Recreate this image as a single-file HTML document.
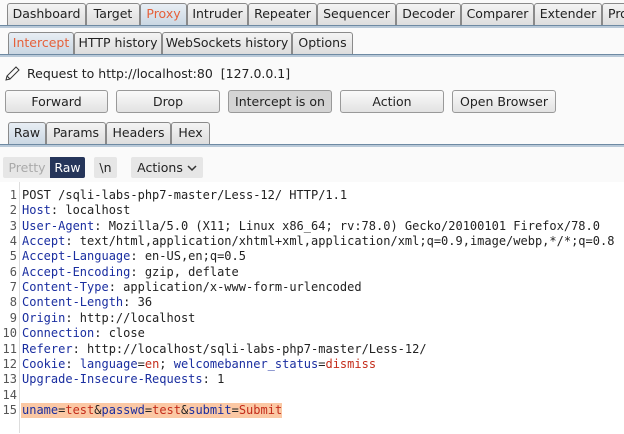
<!DOCTYPE html>
<html><head><style>
*{margin:0;padding:0;box-sizing:border-box}
body{width:624px;height:433px;overflow:hidden;background:#fff;font-family:"DejaVu Sans","Liberation Sans",sans-serif;font-size:12px;color:#222;position:relative}
.a{position:absolute}
.tab{position:absolute;border:1px solid #8a8a8a;border-bottom:none;border-radius:3px 3px 0 0;background:linear-gradient(#f4f4f4,#dcdcdc);text-align:center;font-size:12.5px;line-height:20px;color:#222}
.tab.sel{background:linear-gradient(#e8eef4,#c9d6e2);color:#e5603a}
.line{position:absolute;left:0;width:624px;height:3px;background:#b9c9d8;border-top:1px solid #6e8aa3}
.btn{position:absolute;top:90px;height:23px;border:1px solid #999;border-radius:3px;background:linear-gradient(#fafafa,#e2e2e2);text-align:center;line-height:21px;font-size:12.5px}
.sm{position:absolute;top:157px;height:21px;border-radius:2px;background:#e6e6e6;text-align:center;line-height:21px;font-size:12.5px}
.ed{position:absolute;left:0;top:188px;font-family:"DejaVu Sans Mono",monospace;font-size:12px;line-height:15.35px;white-space:pre}
.ln{position:absolute;left:0;width:17px;text-align:right;color:#555}
.tx{position:absolute;left:22px}
.k{color:#1a2ea0}.v{color:#c42c1a}
</style></head><body>
<div class="a" style="left:0;top:0;width:624px;height:182px;background:#fafafa"></div>
<div class="tab" style="left:7px;top:3px;width:79px;height:23px">Dashboard</div>
<div class="tab" style="left:86px;top:3px;width:54px;height:23px">Target</div>
<div class="tab sel" style="left:140px;top:3px;width:47px;height:23px">Proxy</div>
<div class="tab" style="left:187px;top:3px;width:61px;height:23px">Intruder</div>
<div class="tab" style="left:248px;top:3px;width:69px;height:23px">Repeater</div>
<div class="tab" style="left:317px;top:3px;width:79px;height:23px">Sequencer</div>
<div class="tab" style="left:396px;top:3px;width:65px;height:23px">Decoder</div>
<div class="tab" style="left:461px;top:3px;width:73px;height:23px">Comparer</div>
<div class="tab" style="left:534px;top:3px;width:68px;height:23px">Extender</div>
<div class="tab" style="left:602px;top:3px;width:40px;height:23px;text-align:left;padding-left:5px">Pro</div>
<div class="line" style="top:25px"></div>
<div class="tab sel" style="left:8px;top:32px;width:66px;height:22px">Intercept</div>
<div class="tab" style="left:74px;top:32px;width:88px;height:22px">HTTP history</div>
<div class="tab" style="left:162px;top:32px;width:130px;height:22px">WebSockets history</div>
<div class="tab" style="left:292px;top:32px;width:61px;height:22px">Options</div>
<div class="line" style="top:54px"></div>
<svg class="a" style="left:4px;top:66px" width="16" height="16" viewBox="0 0 16 16"><path d="M2 14 L3 10 L12 1 L15 4 L6 13 Z M3 10 L6 13" fill="none" stroke="#333" stroke-width="1"/></svg>
<div class="a" style="left:27px;top:66px;font-size:12.5px">Request to http://localhost:80&nbsp; [127.0.0.1]</div>
<div class="btn" style="left:5px;width:103px">Forward</div>
<div class="btn" style="left:116px;width:104px">Drop</div>
<div class="btn" style="left:228px;width:104px;background:#d4d4d4">Intercept is on</div>
<div class="btn" style="left:340px;width:104px">Action</div>
<div class="btn" style="left:452px;width:104px">Open Browser</div>
<div class="tab sel" style="left:8px;top:122px;width:38px;height:23px;color:#222">Raw</div>
<div class="tab" style="left:46px;top:122px;width:60px;height:23px">Params</div>
<div class="tab" style="left:106px;top:122px;width:65px;height:23px">Headers</div>
<div class="tab" style="left:171px;top:122px;width:39px;height:23px">Hex</div>
<div class="line" style="top:144px"></div>
<div class="sm" style="left:3px;width:48px;color:#aaa;border-radius:2px 0 0 2px">Pretty</div>
<div class="sm" style="left:50px;width:35px;background:#25355a;color:#fff;border-radius:0 2px 2px 0">Raw</div>
<div class="sm" style="left:94px;width:23px">\n</div>
<div class="sm" style="left:131px;width:72px">Actions <svg width="10" height="8" viewBox="0 0 10 8"><path d="M1 2 L5 6 L9 2" fill="none" stroke="#333" stroke-width="1.5"/></svg></div>
<div class="a" style="left:19px;top:182px;width:1px;height:251px;background:#ddd"></div>
<div class="a" style="left:21px;top:403px;width:261px;height:15px;background:#fbc8a4"></div>
<div class="ed">
<div class="ln" style="top:0">1</div><div class="tx" style="top:0">POST /sqli-labs-php7-master/Less-12/ HTTP/1.1</div>
<div class="ln" style="top:15.35px">2</div><div class="tx" style="top:15.35px"><span class="k">Host</span>: localhost</div>
<div class="ln" style="top:30.7px">3</div><div class="tx" style="top:30.7px"><span class="k">User-Agent</span>: Mozilla/5.0 (X11; Linux x86_64; rv:78.0) Gecko/20100101 Firefox/78.0</div>
<div class="ln" style="top:46.05px">4</div><div class="tx" style="top:46.05px"><span class="k">Accept</span>: text/html,application/xhtml+xml,application/xml;q=0.9,image/webp,*/*;q=0.8</div>
<div class="ln" style="top:61.4px">5</div><div class="tx" style="top:61.4px"><span class="k">Accept-Language</span>: en-US,en;q=0.5</div>
<div class="ln" style="top:76.75px">6</div><div class="tx" style="top:76.75px"><span class="k">Accept-Encoding</span>: gzip, deflate</div>
<div class="ln" style="top:92.1px">7</div><div class="tx" style="top:92.1px"><span class="k">Content-Type</span>: application/x-www-form-urlencoded</div>
<div class="ln" style="top:107.45px">8</div><div class="tx" style="top:107.45px"><span class="k">Content-Length</span>: 36</div>
<div class="ln" style="top:122.8px">9</div><div class="tx" style="top:122.8px"><span class="k">Origin</span>: http://localhost</div>
<div class="ln" style="top:138.15px">10</div><div class="tx" style="top:138.15px"><span class="k">Connection</span>: close</div>
<div class="ln" style="top:153.5px">11</div><div class="tx" style="top:153.5px"><span class="k">Referer</span>: http://localhost/sqli-labs-php7-master/Less-12/</div>
<div class="ln" style="top:168.85px">12</div><div class="tx" style="top:168.85px"><span class="k">Cookie</span>: <span class="k">language</span>=<span class="v">en</span>; <span class="k">welcomebanner_status</span>=<span class="v">dismiss</span></div>
<div class="ln" style="top:184.2px">13</div><div class="tx" style="top:184.2px"><span class="k">Upgrade-Insecure-Requests</span>: 1</div>
<div class="ln" style="top:199.55px">14</div>
<div class="ln" style="top:214.9px">15</div><div class="tx" style="top:214.9px"><span class="k">uname</span>=<span class="v">test</span>&amp;<span class="k">passwd</span>=<span class="v">test</span>&amp;<span class="k">submit</span>=<span class="v">Submit</span></div>
</div>
</body></html>
